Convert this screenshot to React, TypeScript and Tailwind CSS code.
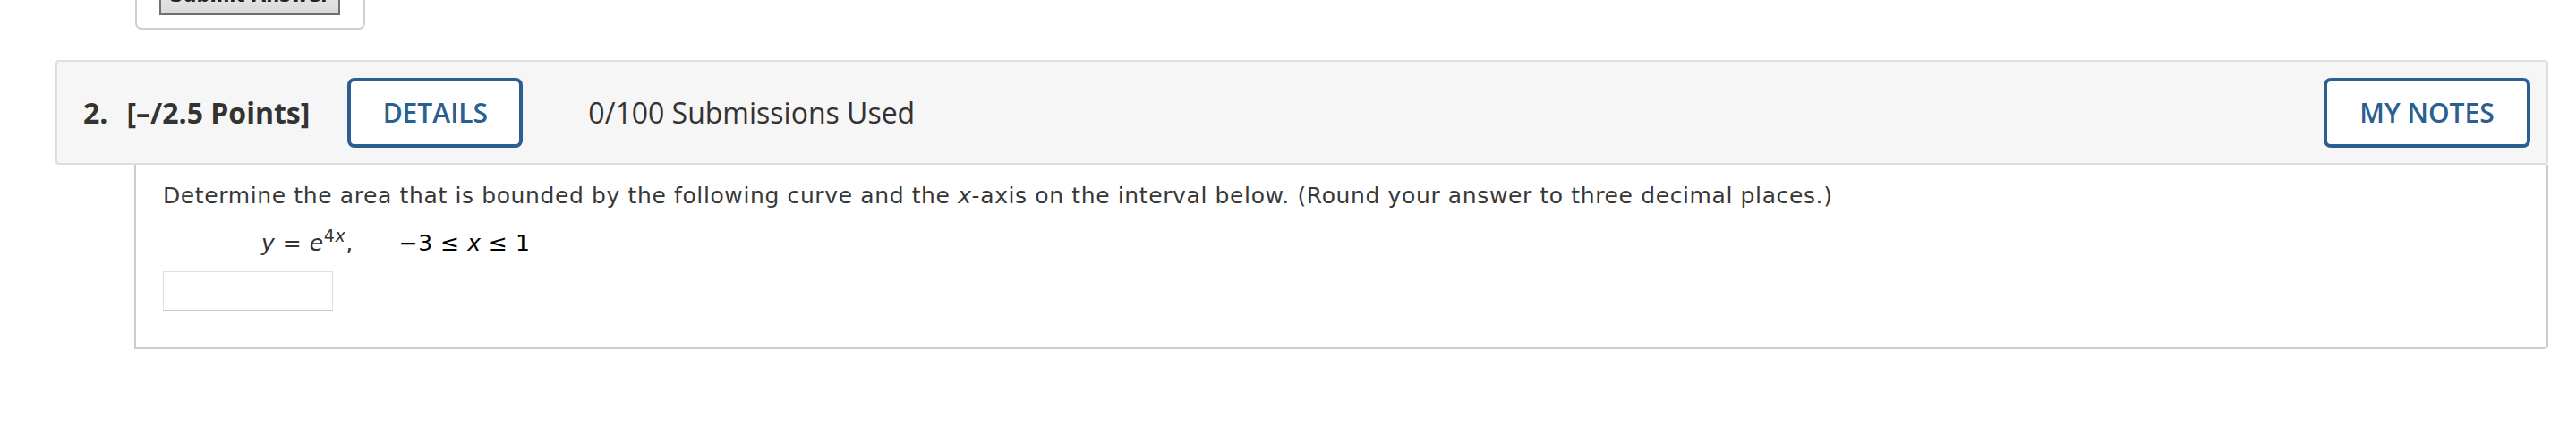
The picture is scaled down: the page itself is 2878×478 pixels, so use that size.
export default function App() {
  return (
    <div className="min-h-[478px] bg-white text-[#333]">
      {/* Previous question's submit card, mostly scrolled off the top */}
      <div className="-mt-[40px] ml-[151px] w-[257px] h-[73px] border-2 border-[#cfcfcf] rounded-[7px] bg-white pl-[25px] pt-[13px]">
        <div className="w-[202px] h-[42px] border-2 border-[#707070] bg-gradient-to-b from-[#f0f0f0] to-[#d9d9d9] flex items-end justify-center overflow-hidden">
          <span className="text-[21px] font-bold leading-none pb-[9px] text-[#222]" style={{ fontFamily: '"DejaVu Sans", Verdana, sans-serif' }}>
            Submit Answer
          </span>
        </div>
      </div>

      {/* Question header */}
      <div
        className="mt-[34px] ml-[62px] w-[2785px] h-[117px] border-2 border-[#dedede] rounded-[4px] bg-[#f6f6f6] flex items-center pl-[29px] pr-[18px]"
        style={{ fontFamily: '"Open Sans", sans-serif' }}
      >
        <span className="text-[32px] font-bold leading-none">2.</span>
        <span className="ml-[21px] text-[32px] font-bold leading-none">[–/2.5 Points]</span>
        <button className="ml-[42px] w-[196px] h-[78px] border-[4px] border-[#2c5f91] rounded-[8px] bg-white text-[#2c5f91] text-[30px] font-semibold leading-none">
          DETAILS
        </button>
        <span className="ml-[73px] text-[32px] leading-none">0/100 Submissions Used</span>
        <button className="ml-auto w-[231px] h-[78px] border-[4px] border-[#2c5f91] rounded-[8px] bg-white text-[#2c5f91] text-[30px] font-semibold leading-none">
          MY NOTES
        </button>
      </div>

      {/* Question body */}
      <div
        className="ml-[150px] w-[2697px] border-l-2 border-r-2 border-b-2 border-[#cccccc] rounded-br-[5px] bg-white pl-[30px] pt-[18px] pb-[41px]"
        style={{ fontFamily: '"DejaVu Sans", Verdana, sans-serif' }}
      >
        <p className="text-[25px] leading-[33px] tracking-[0.62px] text-[#383838]">
          Determine the area that is bounded by the following curve and the <i>x</i>-axis on the interval below. (Round your answer to three decimal places.)
        </p>
        <div className="mt-[19px] pl-[110px] text-[25px] leading-[36px] tracking-[0.55px] flex items-baseline">
          <span className="text-[#333]">
            <i>y</i> = <i>e</i>
            <span className="relative -top-[10px] text-[19px]">
              4<i>x</i>
            </span>
            ,
          </span>
          <span className="ml-[51px] text-black">
            −3 ≤ <i>x</i> ≤ 1
          </span>
        </div>
        <input
          type="text"
          className="block mt-[12px] w-[190px] h-[44px] border border-[#e0e0e0] border-b-[#c8c8c8] bg-white outline-none"
        />
      </div>
    </div>
  )
}
